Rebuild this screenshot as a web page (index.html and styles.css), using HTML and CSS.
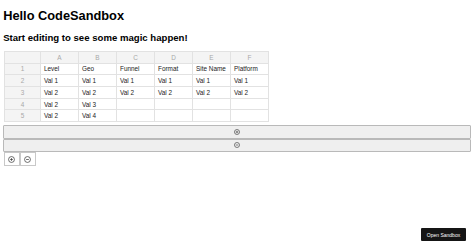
FILE: index.html
```html
<!DOCTYPE html>
<html>
<head>
<meta charset="utf-8">
<link rel="stylesheet" href="styles.css">
</head>
<body>
<div class="app">
  <h1 class="title">Hello CodeSandbox</h1>
  <h2 class="subtitle">Start editing to see some magic happen!</h2>
  <table class="grid">
    <thead>
      <tr><th class="corner"></th><th>A</th><th>B</th><th>C</th><th>D</th><th>E</th><th>F</th></tr>
    </thead>
    <tbody>
      <tr><th>1</th><td>Level</td><td>Geo</td><td>Funnel</td><td>Format</td><td>Site Name</td><td>Platform</td></tr>
      <tr><th>2</th><td>Val 1</td><td>Val 1</td><td>Val 1</td><td>Val 1</td><td>Val 1</td><td>Val 1</td></tr>
      <tr><th>3</th><td>Val 2</td><td>Val 2</td><td>Val 2</td><td>Val 2</td><td>Val 2</td><td>Val 2</td></tr>
      <tr><th>4</th><td>Val 2</td><td>Val 3</td><td></td><td></td><td></td><td></td></tr>
      <tr><th>5</th><td>Val 2</td><td>Val 4</td><td></td><td></td><td></td><td></td></tr>
    </tbody>
  </table>
  <button class="bar" type="button">
    <svg class="ico" viewBox="0 0 10 10"><circle cx="5" cy="5" r="4.2"/><path d="M3 5h4M5 3v4"/></svg>
  </button>
  <button class="bar" type="button">
    <svg class="ico" viewBox="0 0 10 10"><circle cx="5" cy="5" r="4.2"/><path d="M3 5h4"/></svg>
  </button>
  <div class="smallrow">
    <button class="small" type="button"><svg class="ico" viewBox="0 0 10 10"><circle cx="5" cy="5" r="4.2"/><path d="M3 5h4M5 3v4"/></svg></button>
    <button class="small" type="button"><svg class="ico" viewBox="0 0 10 10"><circle cx="5" cy="5" r="4.2"/><path d="M3 5h4"/></svg></button>
  </div>
</div>
<a class="open" href="#">Open Sandbox</a>
</body>
</html>
```
FILE: styles.css
```css
html, body {
  margin: 0;
  padding: 0;
}
body {
  background: #fff;
  font-family: "Liberation Sans", Arial, Helvetica, sans-serif;
  color: #000;
  padding: 0 3.2px;
}
.title {
  font-size: 12.8px;
  font-weight: bold;
  margin: 8.6px 0;
  line-height: 1.15;
}
.subtitle {
  font-size: 9.6px;
  font-weight: bold;
  margin: 8px 0;
  line-height: 1.15;
}
.grid {
  border-collapse: collapse;
  table-layout: fixed;
  margin-left: 0.8px;
  margin-top: 1px;
  font-size: 6.4px;
}
.grid th, .grid td {
  border: 1px solid #e2e2e2;
  height: 10.7px;
  padding: 0 3px;
  font-weight: normal;
  white-space: nowrap;
  overflow: hidden;
  text-align: left;
}
.grid td {
  width: 31px;
  color: #222;
}
.grid th {
  background: #f4f4f4;
  color: #a8a8a8;
  text-align: center;
}
.grid thead th {
  width: 31px;
}
.grid thead th.corner,
.grid tbody th {
  width: 29px;
}
.bar {
  display: flex;
  justify-content: center;
  align-items: center;
  width: 100%;
  height: 13.6px;
  margin: 0;
  padding: 0;
  background: #efefef;
  border: 1px solid #b9b9b9;
  border-radius: 1px;
}
.grid + .bar {
  margin-top: 3px;
}
.ico {
  width: 6px;
  height: 6px;
  fill: none;
  stroke: #333;
  stroke-width: 1;
}
.smallrow {
  display: flex;
  margin-left: 0.8px;
}
.small {
  display: flex;
  justify-content: center;
  align-items: center;
  width: 16px;
  height: 14px;
  margin: 0;
  padding: 0;
  background: #fff;
  border: 1px solid #c8c8c8;
}
.small .ico {
  width: 7px;
  height: 7px;
}
.open {
  position: fixed;
  right: 8px;
  bottom: 7px;
  width: 45px;
  height: 13px;
  display: flex;
  align-items: center;
  justify-content: center;
  background: #151515;
  color: #fff;
  font-size: 5px;
  text-decoration: none;
  border-radius: 1px;
}
```
